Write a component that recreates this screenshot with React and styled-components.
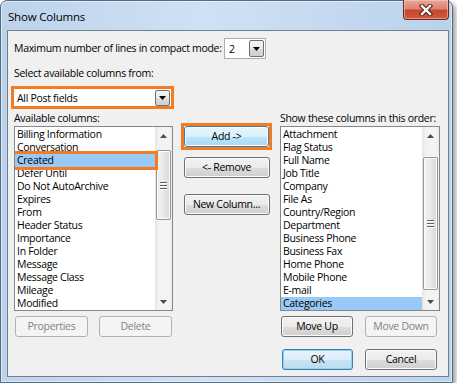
import React from "react"
import styled, { createGlobalStyle, css } from "styled-components"

const GlobalStyle = createGlobalStyle`
  html, body {
    margin: 0;
    padding: 0;
    background: #ffffff;
  }
  body {
    font-family: "Open Sans", "Noto Sans", sans-serif;
    font-size: 10.5px;
    letter-spacing: -0.3px;
    color: #000;
  }
`

const orange = "#f47b20"

const Window = styled.div`
  width: 453px;
  height: 383px;
  box-sizing: border-box;
  border: 1px solid #566a80;
  border-radius: 7px 7px 0 0;
  background: linear-gradient(90deg, #bcd3ec 0%, #cfe1f4 45%, #c4d9f0 75%, #bad2ec 100%);
  box-shadow: 3px 3px 4px rgba(0, 0, 0, 0.35), inset 0 0 0 1px rgba(255, 255, 255, 0.5);
  padding: 0 3px 5px 6px;
  display: flex;
  flex-direction: column;
`

const TitleBar = styled.div`
  height: 29px;
  display: flex;
  justify-content: space-between;
  align-items: flex-start;
  padding-left: 1px;
`

const Title = styled.div`
  font-size: 11.5px;
  letter-spacing: -0.2px;
  line-height: 16px;
  margin-top: 8px;
  color: #000;
`

const CloseButton = styled.div`
  width: 46px;
  height: 20px;
  margin-top: -1px;
  box-sizing: border-box;
  border: 1px solid #6b2a20;
  border-top: none;
  border-radius: 0 0 4px 4px;
  background: linear-gradient(180deg, #e9a899 0%, #dc8372 45%, #c8452d 55%, #d25a3f 100%);
  box-shadow: inset 0 0 0 1px rgba(255, 210, 200, 0.5);
  display: flex;
  align-items: center;
  justify-content: center;
`

const Client = styled.div`
  flex: 1;
  border: 1px solid #6f8093;
  background: #f0f0f0;
  padding: 7px 0 0 6px;
`

const TopRow = styled.div`
  display: flex;
  align-items: center;
  height: 21px;
`

const Label = styled.div`
  line-height: 15px;
  white-space: nowrap;
  width: ${(p) => (p.$width ? `${p.$width}px` : "auto")};
  margin-top: ${(p) => p.$top || 0}px;
`

const Combo = styled.div`
  box-sizing: border-box;
  width: ${(p) => p.$width}px;
  height: ${(p) => p.$height}px;
  background: #fff;
  border: ${(p) => (p.$bare ? "none" : "1px solid #abadb3")};
  display: flex;
  align-items: center;
  justify-content: space-between;
  padding-left: ${(p) => p.$pad}px;
  padding-right: 1px;
`

const DropButton = styled.div`
  box-sizing: border-box;
  width: 15px;
  height: ${(p) => p.$height}px;
  border: 1px solid #707070;
  border-radius: 2px;
  background: linear-gradient(180deg, #f4f4f4 0%, #ebebeb 50%, #dcdcdc 51%, #cfcfcf 100%);
  display: flex;
  align-items: center;
  justify-content: center;
`

const Highlight = styled.div`
  box-sizing: border-box;
  border: 3px solid ${orange};
  width: ${(p) => p.$width}px;
  margin: ${(p) => p.$margin};
`

const Columns = styled.div`
  display: grid;
  grid-template-columns: 159px 91px 160px;
  column-gap: 8px;
  margin-top: 2px;
`

const Column = styled.div`
  display: flex;
  flex-direction: column;
  align-items: ${(p) => (p.$center ? "center" : "stretch")};
  padding-top: ${(p) => p.$top || 0}px;
`

const ListBox = styled.div`
  box-sizing: border-box;
  height: 185px;
  border: 1px solid #828790;
  background: #fff;
  display: flex;
  overflow: hidden;
`

const Items = styled.div`
  flex: 1;
  min-width: 0;
  padding-top: 1px;
`

const Item = styled.div`
  height: 13px;
  line-height: 13px;
  padding-left: 2px;
  white-space: nowrap;
  overflow: hidden;
  ${(p) =>
    p.$selected &&
    css`
      background: #99c9f7;
    `}
  ${(p) =>
    p.$marked &&
    css`
      position: relative;
      z-index: 1;
      outline: 3px solid ${orange};
      overflow: visible;
    `}
`

const ScrollBar = styled.div`
  width: 17px;
  flex: none;
  display: flex;
  flex-direction: column;
  background: linear-gradient(90deg, #e4e4e4 0%, #f2f2f2 20%, #f4f4f4 80%, #ececec 100%);
`

const Arrow = styled.div`
  height: 17px;
  flex: none;
  display: flex;
  align-items: center;
  justify-content: center;
  margin-top: ${(p) => (p.$bottom ? "auto" : "0")};
`

const Thumb = styled.div`
  box-sizing: border-box;
  margin: ${(p) => p.$offset}px 0 0 1px;
  width: 15px;
  height: ${(p) => p.$size}px;
  border: 1px solid #969696;
  border-radius: 2px;
  background: linear-gradient(90deg, #f3f3f3 0%, #e8e8e8 50%, #d6d6d6 100%);
  box-shadow: inset 0 0 0 1px #fbfbfb;
  display: flex;
  flex-direction: column;
  align-items: center;
  justify-content: center;
  gap: 2px;
`

const Grip = styled.div`
  width: 7px;
  height: 1px;
  background: #5f5f5f;
  box-shadow: 0 1px 0 #ffffff;
`

const ButtonRow = styled.div`
  display: flex;
  justify-content: space-between;
  padding: ${(p) => p.$pad};
  margin-top: ${(p) => p.$top}px;
`

const Button = styled.div`
  box-sizing: border-box;
  width: ${(p) => p.$width || 73}px;
  height: 21px;
  line-height: 19px;
  text-align: center;
  white-space: nowrap;
  border: 1px solid #707070;
  border-radius: 3px;
  background: linear-gradient(180deg, #f2f2f2 0%, #ebebeb 50%, #dddddd 51%, #cfcfcf 100%);
  box-shadow: inset 0 0 0 1px #fbfbfb;
  margin-top: ${(p) => p.$top || 0}px;
  ${(p) =>
    p.$active &&
    css`
      border-color: #3c7fb1;
      background: linear-gradient(180deg, #eaf6fd 0%, #d9f0fc 50%, #bee6fd 51%, #a7d9f5 100%);
    `}
  ${(p) =>
    p.$default &&
    css`
      border-color: #3c7fb1;
      background: linear-gradient(180deg, #e8f4fc 0%, #dcedf9 50%, #c8e3f5 51%, #bcdcf1 100%);
      box-shadow: inset 0 0 0 1px #8fd3f3;
    `}
  ${(p) =>
    p.$disabled &&
    css`
      border-color: #adb2b5;
      background: #f4f4f4;
      box-shadow: none;
      color: #838383;
    `}
`

const DownTriangle = () => (
  <svg width="7" height="4" viewBox="0 0 7 4">
    <path d="M0 0 H7 L3.5 4 Z" fill="#000" />
  </svg>
)

const ScrollArrow = ({ up }) => (
  <svg width="7" height="4" viewBox="0 0 7 4">
    <path d={up ? "M0 4 H7 L3.5 0 Z" : "M0 0 H7 L3.5 4 Z"} fill="#4d4d4d" />
  </svg>
)

const available = [
  "Billing Information",
  "Conversation",
  "Created",
  "Defer Until",
  "Do Not AutoArchive",
  "Expires",
  "From",
  "Header Status",
  "Importance",
  "In Folder",
  "Message",
  "Message Class",
  "Mileage",
  "Modified",
]

const shown = [
  "Attachment",
  "Flag Status",
  "Full Name",
  "Job Title",
  "Company",
  "File As",
  "Country/Region",
  "Department",
  "Business Phone",
  "Business Fax",
  "Home Phone",
  "Mobile Phone",
  "E-mail",
  "Categories",
]

const List = ({ items, selected, marked, thumbTop, thumbSize }) => (
  <ListBox>
    <Items>
      {items.map((name) => (
        <Item key={name} $selected={name === selected} $marked={name === marked}>
          {name}
        </Item>
      ))}
    </Items>
    <ScrollBar>
      <Arrow>
        <ScrollArrow up />
      </Arrow>
      <Thumb $offset={thumbTop} $size={thumbSize}>
        <Grip />
        <Grip />
        <Grip />
      </Thumb>
      <Arrow $bottom>
        <ScrollArrow />
      </Arrow>
    </ScrollBar>
  </ListBox>
)

export default function App() {
  return (
    <>
      <GlobalStyle />
      <Window>
        <TitleBar>
          <Title>Show Columns</Title>
          <CloseButton>
            <svg width="16" height="12" viewBox="0 0 16 12">
              <path d="M4 2 L12 10 M12 2 L4 10" stroke="#4a2019" strokeWidth="4.4" strokeLinecap="square" />
              <path d="M4 2 L12 10 M12 2 L4 10" stroke="#ffffff" strokeWidth="2.4" strokeLinecap="square" />
            </svg>
          </CloseButton>
        </TitleBar>
        <Client>
          <TopRow>
            <Label $width={210}>Maximum number of lines in compact mode:</Label>
            <Combo $width={42} $height={21} $pad={4}>
              2
              <DropButton $height={17}>
                <DownTriangle />
              </DropButton>
            </Combo>
          </TopRow>
          <Label $top={7}>Select available columns from:</Label>
          <Highlight $width={163} $margin="5px 0 0 -3px">
            <Combo $bare $width={157} $height={17} $pad={3}>
              All Post fields
              <DropButton $height={16}>
                <DownTriangle />
              </DropButton>
            </Combo>
          </Highlight>
          <Columns>
            <Column>
              <Label>Available columns:</Label>
              <List items={available} selected="Created" marked="Created" thumbTop={6} thumbSize={70} />
              <ButtonRow $pad="0 1px" $top={5}>
                <Button $disabled>Properties</Button>
                <Button $disabled>Delete</Button>
              </ButtonRow>
            </Column>
            <Column $center $top={12}>
              <Highlight $width={91} $margin="0">
                <Button $active $width={85}>Add -&gt;</Button>
              </Highlight>
              <Button $width={86} $top={7}>&lt;- Remove</Button>
              <Button $width={86} $top={16}>New Column...</Button>
            </Column>
            <Column>
              <Label>Show these columns in this order:</Label>
              <List items={shown} selected="Categories" thumbTop={13} thumbSize={133} />
              <ButtonRow $pad="0 3px 0 1px" $top={5}>
                <Button $width={72}>Move Up</Button>
                <Button $width={72} $disabled>Move Down</Button>
              </ButtonRow>
              <ButtonRow $pad="0 3px 0 2px" $top={12}>
                <Button $width={71} $default>OK</Button>
                <Button $width={72}>Cancel</Button>
              </ButtonRow>
            </Column>
          </Columns>
        </Client>
      </Window>
    </>
  )
}
